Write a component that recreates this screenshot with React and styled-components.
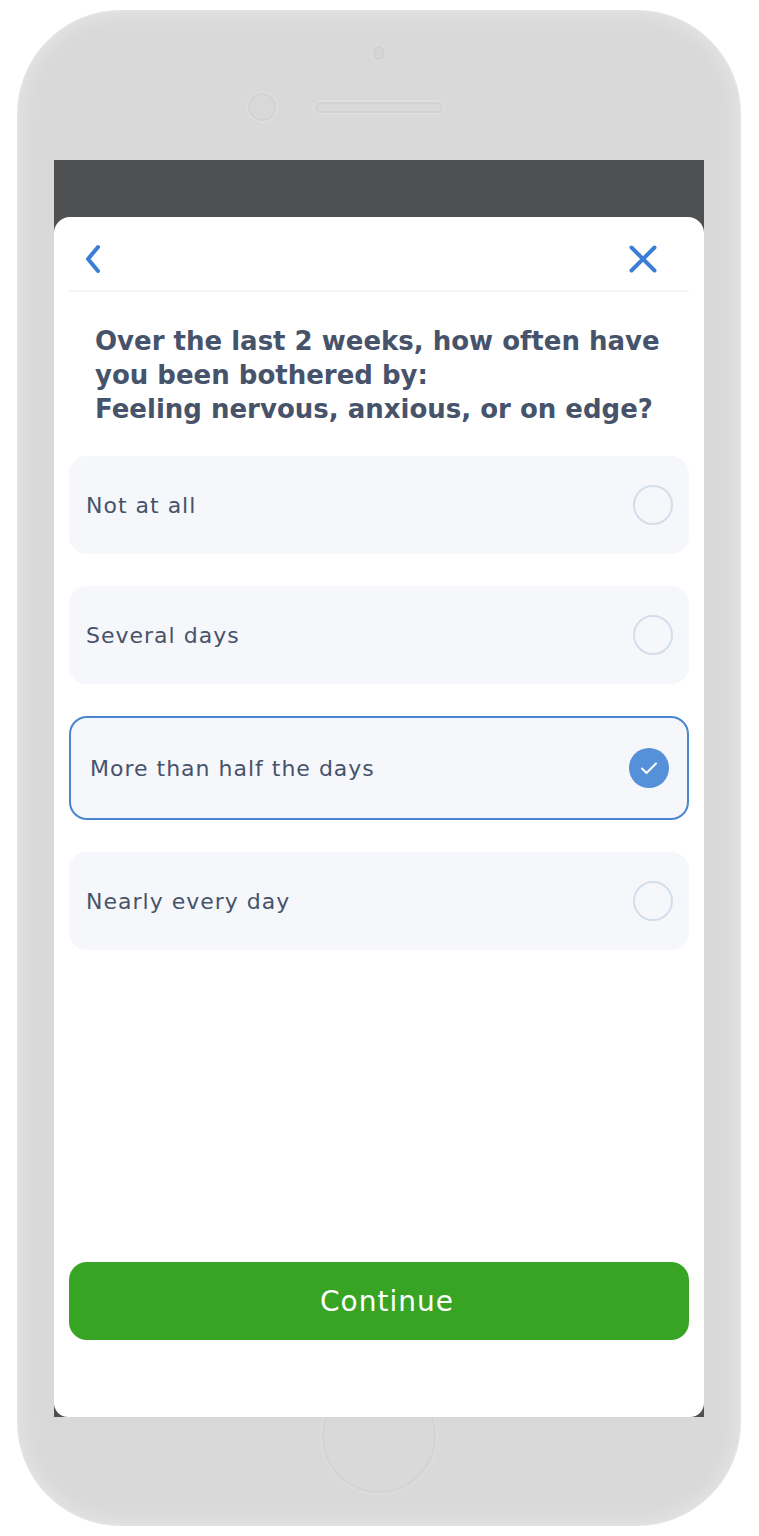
import React, { useState } from "react";
import styled, { createGlobalStyle } from "styled-components";

const GlobalStyle = createGlobalStyle`
  html, body {
    margin: 0;
    padding: 0;
    background: #ffffff;
  }
  body {
    font-family: "DejaVu Sans", "Open Sans", sans-serif;
  }
  * {
    box-sizing: border-box;
  }
`;

const options = [
  "Not at all",
  "Several days",
  "More than half the days",
  "Nearly every day",
];

function Chevron() {
  return (
    <svg width="20" height="30" viewBox="0 0 20 30" fill="none">
      <path
        d="M15 3 L5 15 L15 27"
        stroke="#3a7fd5"
        strokeWidth="4"
        strokeLinecap="round"
        strokeLinejoin="round"
      />
    </svg>
  );
}

function Cross() {
  return (
    <svg width="30" height="30" viewBox="0 0 30 30" fill="none">
      <path
        d="M3.5 3.5 L26.5 26.5 M26.5 3.5 L3.5 26.5"
        stroke="#3a7fd5"
        strokeWidth="4"
        strokeLinecap="round"
      />
    </svg>
  );
}

function Check() {
  return (
    <svg width="18" height="14" viewBox="0 0 18 14" fill="none">
      <path
        d="M2 7.5 L6.5 12 L16 2.5"
        stroke="#ffffff"
        strokeWidth="2"
        strokeLinecap="round"
        strokeLinejoin="round"
      />
    </svg>
  );
}

function App() {
  const [selected, setSelected] = useState(2);

  return (
    <>
      <GlobalStyle />
      <Page>
        <Phone>
          <TopBezel>
            <Sensor />
            <EarRow>
              <FrontCamera />
              <Speaker />
              <span />
            </EarRow>
          </TopBezel>

          <Screen>
            <Sheet>
              <Header>
                <IconButton aria-label="Back">
                  <Chevron />
                </IconButton>
                <IconButton aria-label="Close">
                  <Cross />
                </IconButton>
              </Header>

              <Question>
                Over the last 2 weeks, how often have you been bothered by:
                <br />
                Feeling nervous, anxious, or on edge?
              </Question>

              <OptionList>
                {options.map((label, i) => (
                  <Option
                    key={label}
                    $active={selected === i}
                    onClick={() => setSelected(i)}
                  >
                    <OptionLabel>{label}</OptionLabel>
                    <Radio $active={selected === i}>
                      {selected === i && <Check />}
                    </Radio>
                  </Option>
                ))}
              </OptionList>

              <ContinueButton>Continue</ContinueButton>
            </Sheet>
          </Screen>

          <BottomBezel>
            <HomeButton />
          </BottomBezel>
        </Phone>
      </Page>
    </>
  );
}

export default App;

const Page = styled.div`
  padding: 10px 0 10px 17px;
`;

const Phone = styled.div`
  width: 724px;
  height: 1516px;
  border-radius: 104px;
  background: #d9d9d9;
  border: 2px solid #e3e3e3;
  box-shadow: inset 0 0 14px 6px #e1e1e1;
  display: flex;
  flex-direction: column;
  align-items: center;
  overflow: hidden;
`;

const TopBezel = styled.div`
  height: 148px;
  width: 100%;
  display: flex;
  flex-direction: column;
  align-items: center;
  padding-top: 34px;
`;

const Sensor = styled.div`
  width: 12px;
  height: 14px;
  border-radius: 50%;
  background: #d6d6d6;
  border: 2px solid #d0d0d0;
  box-shadow: 0 0 2px #e6e6e6;
`;

const EarRow = styled.div`
  margin-top: 33px;
  width: 100%;
  display: grid;
  grid-template-columns: 1fr auto 1fr;
  align-items: center;
`;

const FrontCamera = styled.div`
  justify-self: end;
  margin-right: 39px;
  width: 28px;
  height: 28px;
  border-radius: 50%;
  background: #d8d8d8;
  border: 2px solid #d2d2d2;
  box-shadow: 0 0 3px 1px #e2e2e2, inset 0 0 2px #e4e4e4;
`;

const Speaker = styled.div`
  width: 128px;
  height: 11px;
  border-radius: 6px;
  background: #d9d9d9;
  border: 2px solid #d2d2d2;
  box-shadow: 0 0 2px 1px #e3e3e3;
`;

const Screen = styled.div`
  width: 650px;
  height: 1257px;
  background: #4f5052;
  padding-top: 57px;
  position: relative;
  z-index: 1;
`;

const Sheet = styled.div`
  height: 100%;
  background: #ffffff;
  border-radius: 16px 16px 14px 14px;
  padding: 0 15px 77px;
  display: flex;
  flex-direction: column;
`;

const Header = styled.div`
  height: 75px;
  display: flex;
  align-items: center;
  justify-content: space-between;
  padding: 10px 31px 0 14px;
  border-bottom: 2px solid #f4f5f8;
`;

const IconButton = styled.button`
  border: none;
  background: none;
  padding: 0;
  display: flex;
  cursor: pointer;
`;

const Question = styled.h1`
  margin: 32px 0 0;
  padding: 0 22px 0 26px;
  font-family: "DejaVu Sans", "Open Sans", sans-serif;
  font-size: 26px;
  font-weight: 700;
  line-height: 34px;
  color: #46536b;
`;

const OptionList = styled.div`
  margin-top: 30px;
  display: flex;
  flex-direction: column;
  gap: 32px;
`;

const Option = styled.div`
  display: flex;
  align-items: center;
  justify-content: space-between;
  min-height: ${(p) => (p.$active ? "104px" : "98px")};
  padding: ${(p) => (p.$active ? "0 18px 0 19px" : "0 16px 0 17px")};
  border-radius: 18px;
  background: #f6f7fb;
  border: ${(p) => (p.$active ? "2px solid #4a86d0" : "none")};
  cursor: pointer;
`;

const OptionLabel = styled.span`
  font-size: 22px;
  font-weight: 400;
  letter-spacing: 1px;
  color: #46536b;
`;

const Radio = styled.span`
  width: 40px;
  height: 40px;
  border-radius: 50%;
  display: flex;
  align-items: center;
  justify-content: center;
  background: ${(p) => (p.$active ? "#5590d8" : "transparent")};
  border: ${(p) => (p.$active ? "none" : "2px solid #d3deea")};
`;

const ContinueButton = styled.button`
  margin-top: auto;
  height: 78px;
  width: 100%;
  border: none;
  border-radius: 18px;
  background: #38a424;
  color: #ffffff;
  font-family: "DejaVu Sans", "Open Sans", sans-serif;
  font-size: 28px;
  font-weight: 400;
  letter-spacing: 1px;
  padding-left: 22px;
  cursor: pointer;
`;

const BottomBezel = styled.div`
  flex: 1;
  width: 100%;
  display: flex;
  justify-content: center;
`;

const HomeButton = styled.div`
  margin-top: -38px;
  width: 114px;
  height: 114px;
  border-radius: 50%;
  border: 2px solid #d3d3d3;
  box-shadow: 0 0 3px 1px #e0e0e0;
`;
